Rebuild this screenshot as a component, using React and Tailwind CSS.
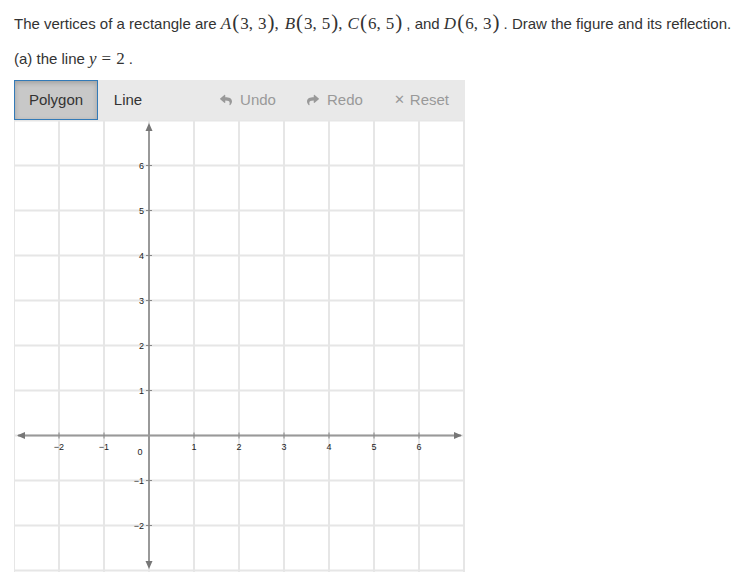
import React from 'react';
import { FaReply, FaShare } from 'react-icons/fa';

const U = 45;
const OX = 135;
const OY = 315.5;
const W = 451;
const H = 452;

function M({ children }) {
  return <span className="font-['Liberation_Serif',serif] text-[17px]">{children}</span>;
}

function Pt({ name, x, y }) {
  return (
    <M>
      <i className="mr-[1px]">{name}</i>
      <span className="text-[21px] mr-[1px]">(</span>
      {x},<span className="ml-[5px]">{y}</span>
      <span className="text-[21px] ml-[1px]">)</span>
    </M>
  );
}

function Graph() {
  const xs = [];
  for (let k = -3; k <= 7; k++) xs.push(k);
  const labelsX = [-2, -1, 1, 2, 3, 4, 5, 6];
  const labelsY = [6, 5, 4, 3, 2, 1, -1, -2];
  const fmt = (n) => (n < 0 ? '\u2212' + Math.abs(n) : String(n));
  return (
    <svg width={W} height={H} className="block">
      {xs.map((k) => (
        <line key={'v' + k} x1={OX + k * U} y1={0} x2={OX + k * U} y2={H} stroke="#e6e6e6" strokeWidth="2" />
      ))}
      {xs.map((k) => (
        <line key={'h' + k} x1={0} y1={OY - k * U} x2={W} y2={OY - k * U} stroke="#e6e6e6" strokeWidth="2" />
      ))}
      {/* axes */}
      <line x1={4} y1={OY} x2={W - 4} y2={OY} stroke="#999" strokeWidth="2" />
      <line x1={OX} y1={5} x2={OX} y2={H - 5} stroke="#999" strokeWidth="2" />
      <polygon points={`${W - 3},${OY} ${W - 11},${OY - 3.5} ${W - 11},${OY + 3.5}`} fill="#777" />
      <polygon points={`3,${OY} 11,${OY - 3.5} 11,${OY + 3.5}`} fill="#777" />
      <polygon points={`${OX},3 ${OX - 3.5},11 ${OX + 3.5},11`} fill="#777" />
      <polygon points={`${OX},${H - 3} ${OX - 3.5},${H - 11} ${OX + 3.5},${H - 11}`} fill="#777" />
      {labelsX.map((n) => (
        <g key={'tx' + n}>
          <line x1={OX + n * U} y1={OY - 3} x2={OX + n * U} y2={OY + 3} stroke="#888" strokeWidth="1" />
          <text x={OX + n * U} y={OY + 14} textAnchor="middle" fontSize="9" fontFamily="Liberation Sans, Arial, sans-serif" fill="#222">
            {fmt(n)}
          </text>
        </g>
      ))}
      {labelsY.map((n) => (
        <g key={'ty' + n}>
          <line x1={OX - 3} y1={OY - n * U} x2={OX + 3} y2={OY - n * U} stroke="#888" strokeWidth="1" />
          <text x={OX - 5} y={OY - n * U + 3} textAnchor="end" fontSize="9" fontFamily="Liberation Sans, Arial, sans-serif" fill="#222">
            {fmt(n)}
          </text>
        </g>
      ))}
      <text x={OX - 9} y={OY + 19} textAnchor="middle" fontSize="9" fontFamily="Liberation Sans, Arial, sans-serif" fill="#222">
        0
      </text>
    </svg>
  );
}

export default function App() {
  return (
    <div className="w-[744px] h-[572px] overflow-hidden bg-white text-[#333] font-['Liberation_Sans',Arial,sans-serif] text-[15px] pl-[14px]">
      <p className="pt-[9px] h-[44px] leading-[26px] whitespace-nowrap">
        The vertices of a rectangle are <Pt name="A" x="3" y="3" />
        <M>,</M>
        <span className="ml-[6px]" />
        <Pt name="B" x="3" y="5" />
        <M>,</M>
        <span className="ml-[5px]" />
        <Pt name="C" x="6" y="5" /> , and <Pt name="D" x="6" y="3" /> . Draw the figure and its reflection.
      </p>
      <p className="h-[36px] leading-[26px] pt-[2px]">
        (a) the line{' '}
        <M>
          <i>y</i>
          <span className="mx-[5px]">=</span>2
        </M>{' '}
        .
      </p>
      <div className="w-[451px]">
        <div className="h-[40px] bg-[#e9e9e9] flex items-stretch">
          <div className="w-[84px] flex items-center justify-center border border-[#337ab7] bg-[#c8c8c8] shadow-[inset_0_2px_5px_rgba(0,0,0,0.2)]">
            Polygon
          </div>
          <div className="w-[60px] flex items-center justify-center">Line</div>
          <div className="flex-1" />
          <div className="flex items-center text-[#999] pr-[16px] gap-[31px]">
            <span className="flex items-center gap-[8px]">
              <FaReply size={12} color="#999" />
              Undo
            </span>
            <span className="flex items-center gap-[8px]">
              <FaShare size={12} color="#999" />
              Redo
            </span>
            <span className="flex items-center gap-[5px]">
              <span className="text-[13px]">✕</span>
              Reset
            </span>
          </div>
        </div>
        <Graph />
      </div>
    </div>
  );
}
